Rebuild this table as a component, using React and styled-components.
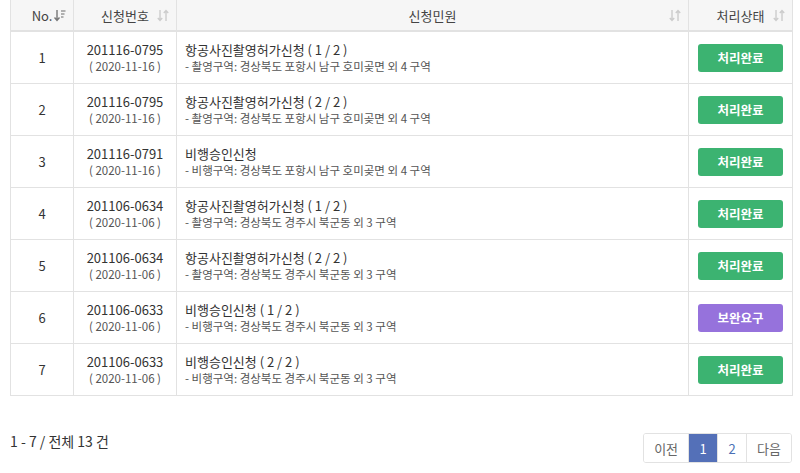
import React from 'react';
import styled, { createGlobalStyle } from 'styled-components';

const GlobalStyle = createGlobalStyle`
  html, body {
    margin: 0;
    padding: 0;
    background: #fff;
    font-family: "Noto Sans CJK KR", "Noto Sans", sans-serif;
    color: #333;
  }
`;

const Page = styled.div`
  padding: 0 8px 0 10px;
`;

const Table = styled.table`
  width: 782px;
  border-collapse: collapse;
  table-layout: fixed;
  border: 1px solid #e2e2e2;
  border-top: none;
`;

const Th = styled.th`
  position: relative;
  height: 31px;
  padding: 0 8px;
  background: #f6f6f6;
  border-right: 1px solid #e2e2e2;
  border-bottom: 2px solid #e2e2e2;
  font-size: 13px;
  font-weight: 400;
  color: #444;
  text-align: center;
  box-sizing: border-box;
  &:last-child {
    border-right: none;
  }
`;

const SortMark = styled.span`
  position: absolute;
  right: 7px;
  top: 9px;
  display: flex;
`;

const Td = styled.td`
  height: 51px;
  padding: 0 8px;
  border-right: 1px solid #e2e2e2;
  border-bottom: 1px solid #e2e2e2;
  text-align: ${(p) => p.$align || 'center'};
  vertical-align: middle;
  font-size: 13px;
  color: #333;
  &:last-child {
    border-right: none;
  }
`;

const Main = styled.div`
  font-size: 13px;
  line-height: 17px;
  color: #333;
`;

const Sub = styled.div`
  font-size: 11.5px;
  line-height: 16px;
  color: #555;
`;

const StatusButton = styled.span`
  display: inline-flex;
  align-items: center;
  justify-content: center;
  width: 85px;
  height: 28px;
  border-radius: 3px;
  background: ${(p) => (p.$tone === 'purple' ? '#9672dc' : '#3cb371')};
  color: #fff;
  font-size: 12.5px;
  font-weight: 700;
`;

const Footer = styled.div`
  display: flex;
  align-items: flex-start;
  justify-content: space-between;
  width: 782px;
  margin-top: 37px;
`;

const Summary = styled.div`
  margin-top: -2px;
  font-size: 14px;
  line-height: 20px;
  color: #333;
`;

const Pager = styled.div`
  display: flex;
  border: 1px solid #e2e2e2;
  border-radius: 3px;
  overflow: hidden;
`;

const PageButton = styled.span`
  display: flex;
  align-items: center;
  justify-content: center;
  height: 28px;
  padding: 0 ${(p) => (p.$wide ? 10 : 0)}px;
  min-width: ${(p) => (p.$wide ? 'auto' : '28px')};
  font-size: 13px;
  color: ${(p) => (p.$active ? '#fff' : p.$num ? '#4a6fb5' : '#666')};
  background: ${(p) => (p.$active ? '#5470b8' : '#fff')};
  border-left: 1px solid #e2e2e2;
  &:first-child {
    border-left: none;
  }
`;

const SortIcon = ({ active }) =>
  active ? (
    <svg width="12" height="13" viewBox="0 0 12 13">
      <path d="M3 1v10M0.5 8.5L3 11.5L5.5 8.5" stroke="#777" strokeWidth="1.4" fill="none" />
      <path d="M7 2h4.5M7 5h3.5M7 8h2.5" stroke="#999" strokeWidth="1.3" />
    </svg>
  ) : (
    <svg width="12" height="13" viewBox="0 0 12 13">
      <path d="M3 1v10.5M0.8 9L3 11.5L5.2 9" stroke="#ccc" strokeWidth="1.4" fill="none" />
      <path d="M9 12V1.5M6.8 4L9 1.5L11.2 4" stroke="#ccc" strokeWidth="1.4" fill="none" />
    </svg>
  );

const rows = [
  { no: 1, id: '201116-0795', date: '2020-11-16', title: '항공사진촬영허가신청 ( 1 / 2 )', area: '- 촬영구역: 경상북도 포항시 남구 호미곶면 외 4 구역', status: '처리완료' },
  { no: 2, id: '201116-0795', date: '2020-11-16', title: '항공사진촬영허가신청 ( 2 / 2 )', area: '- 촬영구역: 경상북도 포항시 남구 호미곶면 외 4 구역', status: '처리완료' },
  { no: 3, id: '201116-0791', date: '2020-11-16', title: '비행승인신청', area: '- 비행구역: 경상북도 포항시 남구 호미곶면 외 4 구역', status: '처리완료' },
  { no: 4, id: '201106-0634', date: '2020-11-06', title: '항공사진촬영허가신청 ( 1 / 2 )', area: '- 촬영구역: 경상북도 경주시 북군동 외 3 구역', status: '처리완료' },
  { no: 5, id: '201106-0634', date: '2020-11-06', title: '항공사진촬영허가신청 ( 2 / 2 )', area: '- 촬영구역: 경상북도 경주시 북군동 외 3 구역', status: '처리완료' },
  { no: 6, id: '201106-0633', date: '2020-11-06', title: '비행승인신청 ( 1 / 2 )', area: '- 비행구역: 경상북도 경주시 북군동 외 3 구역', status: '보완요구', tone: 'purple' },
  { no: 7, id: '201106-0633', date: '2020-11-06', title: '비행승인신청 ( 2 / 2 )', area: '- 비행구역: 경상북도 경주시 북군동 외 3 구역', status: '처리완료' },
];

export default function App() {
  return (
    <Page>
      <GlobalStyle />
      <Table>
        <colgroup>
          <col style={{ width: 63 }} />
          <col style={{ width: 103 }} />
          <col style={{ width: 512 }} />
          <col style={{ width: 104 }} />
        </colgroup>
        <thead>
          <tr>
            <Th>No.<SortMark><SortIcon active /></SortMark></Th>
            <Th>신청번호<SortMark><SortIcon /></SortMark></Th>
            <Th>신청민원<SortMark><SortIcon /></SortMark></Th>
            <Th>처리상태<SortMark><SortIcon /></SortMark></Th>
          </tr>
        </thead>
        <tbody>
          {rows.map((r) => (
            <tr key={r.no}>
              <Td>{r.no}</Td>
              <Td>
                <Main>{r.id}</Main>
                <Sub>( {r.date} )</Sub>
              </Td>
              <Td $align="left">
                <Main>{r.title}</Main>
                <Sub>{r.area}</Sub>
              </Td>
              <Td>
                <StatusButton $tone={r.tone}>{r.status}</StatusButton>
              </Td>
            </tr>
          ))}
        </tbody>
      </Table>
      <Footer>
        <Summary>1 - 7 / 전체 13 건</Summary>
        <Pager>
          <PageButton $wide>이전</PageButton>
          <PageButton $active>1</PageButton>
          <PageButton $num>2</PageButton>
          <PageButton $wide>다음</PageButton>
        </Pager>
      </Footer>
    </Page>
  );
}
